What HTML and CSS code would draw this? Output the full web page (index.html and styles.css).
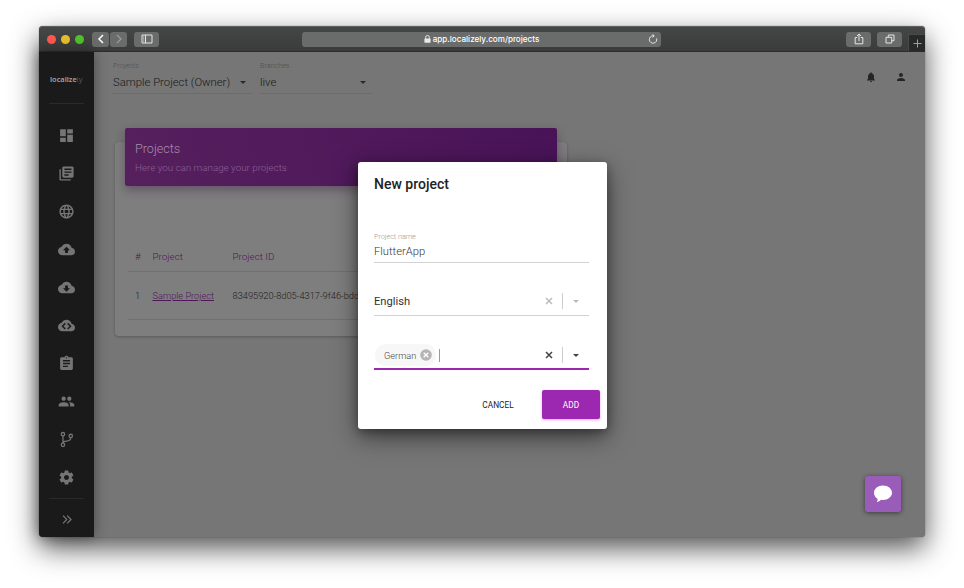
FILE: index.html
```html
<!DOCTYPE html>
<html lang="en">
<head>
  <meta charset="UTF-8" />
  <title>Localizely - Projects</title>
  <link rel="stylesheet" href="styles.css">
</head>
<body>
  <div class="window">
    <header class="titlebar">
      <div class="lights">
        <span class="light red"></span>
        <span class="light yellow"></span>
        <span class="light green"></span>
      </div>
      <div class="nav">
        <span class="tool back"><svg width="8" height="10" viewBox="0 0 8 10"><path d="M6 1 2 5l4 4"/></svg></span>
        <span class="tool forward"><svg width="8" height="10" viewBox="0 0 8 10"><path d="M2 1l4 4-4 4"/></svg></span>
      </div>
      <span class="tool panel"><svg width="12" height="10" viewBox="0 0 12 10"><path d="M1 1h10v8H1zM4.5 1v8M2.2 3h1M2.2 5h1M2.2 7h1"/></svg></span>
      <div class="address">
        <svg class="lock" width="7" height="8" viewBox="0 0 7 8"><path d="M1 3.5h5a.6.6 0 0 1 .6.6v3a.6.6 0 0 1-.6.6H1a.6.6 0 0 1-.6-.6v-3a.6.6 0 0 1 .6-.6z"/><path class="shackle" d="M1.7 4V2.3a1.8 1.8 0 0 1 3.6 0V4"/></svg>
        <span>app.localizely.com/projects</span>
        <svg class="reload" width="10" height="10" viewBox="0 0 10 10"><path d="M8.6 4.4A3.7 3.7 0 1 1 5 1.8h1M4.4.2 6.2 1.8 4.6 3.5"/></svg>
      </div>
      <span class="tool share"><svg width="10" height="12" viewBox="0 0 10 12"><path d="M3.2 4.5H1.2v6.3h7.6V4.5h-2M5 8V1.2M3 3l2-2 2 2"/></svg></span>
      <span class="tool tabs"><svg width="10" height="10" viewBox="0 0 10 10"><path d="M1 3.3h5.7V9H1zM3.3 3V1H9v5.7H7"/></svg></span>
      <span class="new-tab"><svg width="9" height="9" viewBox="0 0 9 9"><path d="M4.5.5v8M.5 4.5h8"/></svg></span>
    </header>

    <div class="app">
      <aside class="sidebar">
        <div class="logo">localize<span>ly</span></div>
        <nav class="menu">
          <a><svg viewBox="0 0 24 24"><path d="M3 13h8V3H3v10zm0 8h8v-6H3v6zm10 0h8V11h-8v10zm0-18v6h8V3h-8z"/></svg></a>
          <a><svg viewBox="0 0 24 24"><path d="M4 6H2v14c0 1.100.9 2 2 2h14v-2H4V6zm16-4H8c-1.100 0-2 .9-2 2v12c0 1.100.9 2 2 2h12c1.100 0 2-.9 2-2V4c0-1.100-.9-2-2-2zm-1 9H9V9h10v2zm-4 4H9v-2h6v2zm4-8H9V5h10v2z"/></svg></a>
          <a><svg viewBox="0 0 24 24"><path d="M11.990 2C6.470 2 2 6.480 2 12s4.470 10 9.990 10C17.520 22 22 17.520 22 12S17.520 2 11.990 2zm6.930 6h-2.950c-.32-1.250-.78-2.450-1.380-3.560 1.840.63 3.370 1.910 4.330 3.560zM12 4.040c.83 1.200 1.480 2.530 1.910 3.960h-3.820c.43-1.430 1.080-2.760 1.910-3.960zM4.260 14C4.100 13.360 4 12.690 4 12s.1-1.360.26-2h3.380c-.08.66-.14 1.320-.14 2s.06 1.340.14 2H4.260zm.82 2h2.950c.32 1.250.78 2.450 1.380 3.560-1.840-.63-3.370-1.900-4.330-3.560zm2.950-8H5.080c.96-1.660 2.490-2.930 4.330-3.560C8.810 5.550 8.350 6.750 8.030 8zM12 19.960c-.83-1.200-1.480-2.530-1.910-3.960h3.820c-.43 1.430-1.080 2.760-1.910 3.960zM14.340 14H9.660c-.09-.66-.16-1.320-.16-2s.07-1.350.16-2h4.680c.09.65.16 1.320.16 2s-.07 1.340-.16 2zm.25 5.560c.6-1.110 1.060-2.310 1.380-3.560h2.950c-.96 1.650-2.490 2.930-4.330 3.560zM16.360 14c.08-.66.14-1.320.14-2s-.06-1.340-.14-2h3.380c.16.64.26 1.310.26 2s-.1 1.360-.26 2h-3.380z"/></svg></a>
          <a><svg viewBox="0 0 24 24"><path d="M19.350 10.040C18.670 6.590 15.640 4 12 4 9.110 4 6.600 5.640 5.350 8.040 2.340 8.360 0 10.910 0 14c0 3.310 2.690 6 6 6h13c2.760 0 5-2.240 5-5 0-2.640-2.050-4.780-4.650-4.960zM14 13v4h-4v-4H7l5-5 5 5h-3z"/></svg></a>
          <a><svg viewBox="0 0 24 24"><path d="M19.350 10.040C18.670 6.590 15.640 4 12 4 9.110 4 6.600 5.640 5.350 8.040 2.340 8.360 0 10.910 0 14c0 3.310 2.690 6 6 6h13c2.760 0 5-2.240 5-5 0-2.640-2.050-4.780-4.650-4.960zM17 13l-5 5-5-5h3V9h4v4h3z"/></svg></a>
          <a><svg viewBox="0 0 24 24"><path d="M19.350 10.040C18.670 6.590 15.640 4 12 4 9.110 4 6.600 5.640 5.350 8.040 2.340 8.360 0 10.910 0 14c0 3.310 2.690 6 6 6h13c2.760 0 5-2.240 5-5 0-2.640-2.050-4.780-4.650-4.960z"/><path class="cut" d="M10.300 9 6.300 13l4 4M13.700 9l4 4-4 4"/></svg></a>
          <a><svg viewBox="0 0 24 24"><path d="M19 3h-4.180C14.400 1.840 13.300 1 12 1c-1.300 0-2.400.84-2.820 2H5c-1.100 0-2 .9-2 2v14c0 1.100.9 2 2 2h14c1.100 0 2-.9 2-2V5c0-1.100-.9-2-2-2zm-7 0c.55 0 1 .45 1 1s-.45 1-1 1-1-.45-1-1 .45-1 1-1zm2 14H7v-2h7v2zm3-4H7v-2h10v2zm0-4H7V7h10v2z"/></svg></a>
          <a><svg viewBox="0 0 24 24"><path d="M16 11c1.660 0 2.990-1.340 2.990-3S17.660 5 16 5c-1.660 0-3 1.340-3 3s1.340 3 3 3zm-8 0c1.660 0 2.990-1.340 2.990-3S9.660 5 8 5C6.340 5 5 6.340 5 8s1.340 3 3 3zm0 2c-2.330 0-7 1.170-7 3.500V19h14v-2.500c0-2.330-4.670-3.500-7-3.500zm8 0c-.29 0-.62.02-.97.05 1.160.84 1.970 1.970 1.970 3.450V19h6v-2.500c0-2.330-4.670-3.500-7-3.500z"/></svg></a>
          <a><svg viewBox="0 0 24 24"><g class="line"><circle cx="7" cy="4.500" r="2.400"/><circle cx="7" cy="19.500" r="2.400"/><circle cx="18" cy="7" r="2.400"/><path d="M7 7v10M18 9.500c0 4-3 4.500-6 4.700-3 .2-5 .8-5 2.800"/></g></svg></a>
          <a><svg viewBox="0 0 24 24"><path d="M19.430 12.980c.04-.32.07-.64.07-.98s-.03-.66-.07-.98l2.110-1.650c.19-.15.24-.42.12-.64l-2-3.460c-.12-.22-.39-.3-.61-.22l-2.490 1c-.52-.4-1.080-.73-1.690-.98l-.38-2.650C14.460 2.180 14.250 2 14 2h-4c-.25 0-.46.18-.49.42l-.38 2.650c-.61.25-1.170.59-1.690.98l-2.490-1c-.23-.09-.49 0-.61.22l-2 3.460c-.13.22-.07.49.12.64l2.110 1.650c-.04.32-.07.65-.07.98s.03.66.07.98l-2.110 1.650c-.19.15-.24.42-.12.64l2 3.460c.12.22.39.3.61.22l2.490-1c.52.4 1.080.73 1.690.98l.38 2.650c.03.24.24.42.49.42h4c.25 0 .46-.18.49-.42l.38-2.650c.61-.25 1.170-.59 1.690-.98l2.490 1c.23.09.49 0 .61-.22l2-3.460c.12-.22.07-.49-.12-.64l-2.110-1.650zM12 15.500c-1.930 0-3.500-1.570-3.500-3.500s1.570-3.500 3.500-3.500 3.500 1.570 3.500 3.500-1.570 3.500-3.500 3.500z"/></svg></a>
        </nav>
        <a class="collapse"><svg width="10" height="9" viewBox="0 0 10 9"><path d="M1 .7l3.800 3.800L1 8.300M5.200.7 9 4.500 5.200 8.300"/></svg></a>
      </aside>

      <main class="content">
        <div class="topbar">
          <div class="select projects">
            <label>Projects</label>
            <div class="value">Sample Project (Owner)<i class="caret"></i></div>
          </div>
          <div class="select branches">
            <label>Branches</label>
            <div class="value">live<i class="caret"></i></div>
          </div>
          <div class="user-icons">
            <svg viewBox="0 0 24 24"><path d="M12 22c1.100 0 2-.9 2-2h-4c0 1.100.89 2 2 2zm6-6v-5c0-3.070-1.640-5.640-4.500-6.320V4c0-.83-.67-1.500-1.500-1.500s-1.500.67-1.500 1.500v.68C7.630 5.360 6 7.920 6 11v5l-2 2v1h16v-1l-2-2z"/></svg>
            <svg viewBox="0 0 24 24"><path d="M12 12c2.210 0 4-1.790 4-4s-1.790-4-4-4-4 1.790-4 4 1.790 4 4 4zm0 2c-2.670 0-8 1.340-8 4v2h16v-2c0-2.660-5.330-4-8-4z"/></svg>
          </div>
        </div>

        <section class="card">
          <div class="card-header">
            <h4>Projects</h4>
            <p>Here you can manage your projects</p>
          </div>
          <div class="table">
            <div class="row head"><span>#</span><span>Project</span><span>Project ID</span></div>
            <div class="row"><span>1</span><span><a class="link">Sample Project</a></span><span>83495920-8d05-4317-9f46-bdd</span></div>
          </div>
        </section>
      </main>
    </div>

    <div class="modal">
      <h3>New project</h3>
      <label>Project name</label>
      <div class="field name">FlutterApp</div>
      <div class="field language">
        <span class="text">English</span>
        <svg class="clear" width="8" height="8" viewBox="0 0 8 8"><path d="M1 1l6 6M7 1 1 7"/></svg>
        <i class="separator"></i>
        <i class="caret"></i>
      </div>
      <div class="field language active">
        <span class="chip">German
          <svg width="12" height="12" viewBox="0 0 12 12"><circle cx="6" cy="6" r="5.800"/><path d="M3.700 3.700l4.600 4.600M8.300 3.700 3.700 8.300"/></svg>
        </span>
        <i class="cursor"></i>
        <svg class="clear" width="8" height="8" viewBox="0 0 8 8"><path d="M1 1l6 6M7 1 1 7"/></svg>
        <i class="separator"></i>
        <i class="caret"></i>
      </div>
      <div class="actions">
        <button class="cancel">CANCEL</button>
        <button class="add">ADD</button>
      </div>
    </div>

    <div class="chat">
      <svg width="20" height="18" viewBox="0 0 20 18"><path d="M10 .5c5 0 9 3.200 9 7.200s-4 7.200-9 7.200c-.7 0-1.400-.1-2-.2-1 1.200-2.600 2.100-4.500 2.300.8-.9 1.200-2 1.100-3.100C2.400 12.600 1 10.300 1 7.700 1 3.700 5 .5 10 .5z"/></svg>
    </div>
  </div>
</body>
</html>
```
FILE: styles.css
```css
* {
  box-sizing: border-box;
}

body {
  margin: 0;
  height: 588px;
  padding: 26px 0 0 39px;
  overflow: hidden;
  background: #fff;
  font-family: Roboto, sans-serif;
}

svg {
  display: block;
}

.window {
  position: relative;
  width: 886px;
  height: 511px;
  border-radius: 4px;
  background: #767676;
  box-shadow: 0 0 1px rgba(0, 0, 0, 0.7), 0 11px 28px rgba(0, 0, 0, 0.68);
}

/* browser bar */
.titlebar {
  display: flex;
  align-items: center;
  height: 26px;
  padding-left: 8px;
  border-radius: 4px 4px 0 0;
  border-top: 1px solid #5e605f;
  border-bottom: 1px solid #2b2d2c;
  background: linear-gradient(#454746, #393c3a);
}

.lights {
  display: flex;
  gap: 5px;
}

.light {
  width: 9px;
  height: 9px;
  border-radius: 50%;
}

.red { background: #fc5850; }
.yellow { background: #e6bd2c; }
.green { background: #4fc22c; }

.nav {
  display: flex;
  gap: 1px;
  margin-left: 8px;
}

.tool {
  display: flex;
  align-items: center;
  justify-content: center;
  width: 25px;
  height: 15px;
  border-radius: 3px;
  background: #6a6c6b;
}

.tool svg,
.new-tab svg,
.reload {
  fill: none;
  stroke: #e4e4e4;
}

.nav .tool {
  width: 17px;
}

.back svg { stroke: #fff; stroke-width: 1.500; }
.forward svg { stroke: #9a9c9b; stroke-width: 1.200; }

.panel {
  margin-left: 7px;
}

.address {
  display: flex;
  align-items: center;
  justify-content: center;
  position: relative;
  width: 359px;
  height: 15px;
  margin-left: 143px;
  border-radius: 3px;
  background: #6a6c6b;
  color: #fff;
  font: 500 8.100px Inter, sans-serif;
}

.lock {
  margin-right: 2px;
  fill: #e8e8e8;
}

.shackle {
  fill: none;
  stroke: #e8e8e8;
}

.reload {
  position: absolute;
  right: 3px;
  top: 2px;
}

.share { margin-left: 185px; }
.tabs { margin-left: 6px; }

.new-tab {
  display: flex;
  align-items: center;
  justify-content: center;
  align-self: flex-end;
  width: 17px;
  height: 17px;
  margin-left: auto;
  border-left: 1px solid #484a49;
  border-top: 1px solid #484a49;
  background: #282a29;
}

.new-tab svg {
  stroke: #a0a0a0;
}

/* layout */
.app {
  display: flex;
  height: 485px;
}

.sidebar {
  display: flex;
  flex-direction: column;
  align-items: center;
  width: 55px;
  border-radius: 0 0 0 4px;
  background: #1a1a1a;
  box-shadow: 0 0 14px rgba(0, 0, 0, 0.4);
}

.logo {
  width: 35px;
  height: 52px;
  padding: 21px 0 0 1px;
  border-bottom: 1px solid #2b2b2b;
  color: #a3a3a3;
  font: 600 7.400px/13px "Noto Sans", sans-serif;
  white-space: nowrap;
}

.logo span {
  color: #555;
  font-weight: 400;
}

.menu {
  width: 35px;
  height: 395px;
  padding-top: 12px;
  border-bottom: 1px solid #292929;
}

.menu a {
  display: flex;
  align-items: center;
  justify-content: center;
  height: 38px;
}

.menu svg {
  width: 17px;
  height: 17px;
  fill: #757575;
}

.menu .cut {
  fill: none;
  stroke: #1a1a1a;
  stroke-width: 2;
}

.menu .line {
  fill: none;
  stroke: #757575;
  stroke-width: 1.800;
}

.collapse {
  margin-top: 16px;
}

.collapse svg {
  fill: none;
  stroke: #757575;
  stroke-width: 1.200;
}

.content {
  flex: 1;
  padding: 9px 19px 0 19px;
}

.topbar {
  display: flex;
}

.select {
  height: 33px;
  margin-right: 8px;
  border-bottom: 1px solid #6b6b6b;
}

.projects { width: 139px; }
.branches { width: 112px; }

.select label {
  display: block;
  color: #505050;
  font-size: 7.200px;
  font-weight: 300;
  line-height: 10px;
}

.value {
  display: flex;
  align-items: center;
  justify-content: space-between;
  padding: 0 6px 0 0;
  color: #181818;
  font-size: 11.300px;
  font-weight: 300;
  line-height: 23px;
}

.caret {
  border: 3.500px solid transparent;
  border-top-color: #2a2a2a;
  border-bottom: 0;
}

.user-icons {
  display: flex;
  gap: 18px;
  margin: 10px -1px 0 auto;
}

.user-icons svg {
  width: 12px;
  height: 12px;
  fill: #252525;
}

/* projects card */
.card {
  display: flow-root;
  width: 452px;
  height: 194px;
  margin: 48px 0 0 2px;
  padding: 0 10px;
  border-radius: 4px;
  background: #7e7e7e;
  box-shadow: 0 1px 3px rgba(0, 0, 0, 0.25);
}

.card-header {
  height: 58px;
  margin-top: -14px;
  padding: 12px 10px;
  border-radius: 2px;
  background: linear-gradient(75deg, #56205e, #491358);
  box-shadow: 0 4px 10px rgba(60, 20, 70, 0.4);
}

.card-header h4 {
  margin: 0;
  color: #a58ca9;
  font-size: 12.600px;
  font-weight: 300;
  line-height: 17px;
}

.card-header p {
  margin: 5px 0 0;
  color: #8a6093;
  font-size: 9.800px;
  font-weight: 300;
  line-height: 12px;
}

.table {
  margin: 42px 3px 0;
}

.row {
  display: grid;
  grid-template-columns: 17.500px 80px 1fr;
  height: 48px;
  padding-left: 7px;
  border-bottom: 1px solid #707070;
  color: #202020;
  font-size: 9.250px;
  font-weight: 300;
  line-height: 48px;
  white-space: nowrap;
}

.row.head {
  height: 44px;
  color: #501659;
  font-size: 9.850px;
  line-height: 57px;
}

.link {
  color: #501659;
  text-decoration: underline;
}

/* new project dialog */
.modal {
  position: absolute;
  left: 318.500px;
  top: 135.500px;
  width: 249px;
  height: 267px;
  padding: 13px 17px 0 16.500px;
  border-radius: 3px;
  background: #fff;
  box-shadow: 0 8px 25px rgba(0, 0, 0, 0.5), 0 3px 10px rgba(0, 0, 0, 0.3);
  color: #333;
}

.modal h3 {
  margin: 0 0 41px;
  color: #222;
  font-size: 14px;
  font-weight: 500;
  line-height: 18px;
}

.modal label {
  display: block;
  color: #999;
  font-size: 7.200px;
  font-weight: 300;
  line-height: 5px;
}

.field {
  display: flex;
  align-items: center;
  width: 215px;
  border-bottom: 1px solid #d2d2d2;
}

.name {
  height: 24px;
  padding-top: 2px;
  color: #333;
  font-size: 11.200px;
  font-weight: 300;
}

.language {
  height: 28px;
  margin-top: 25px;
  padding-right: 10px;
  font-size: 11.200px;
}

.language .text {
  margin-right: auto;
}

.clear {
  stroke: #bbb;
  stroke-width: 1.500;
}

.separator {
  width: 1px;
  height: 16px;
  margin: 0 10px 0 9px;
  background: #ccc;
}

.modal .caret {
  border-top-color: #bbb;
}

.active {
  height: 27px;
  margin-top: 27px;
  border-bottom: 2px solid #9c27b0;
}

.active .clear {
  margin-left: auto;
  stroke: #444;
}

.modal .active .caret {
  border-top-color: #444;
}

.chip {
  display: flex;
  align-items: center;
  gap: 4px;
  height: 22px;
  margin-left: 1px;
  padding: 0 4px 0 9px;
  border-radius: 11px;
  background: #f7f7f7;
  color: #444;
  font-size: 9.200px;
  font-weight: 300;
}

.chip svg {
  fill: #b5b5b5;
  stroke: none;
}

.chip path {
  stroke: #fff;
  stroke-width: 1.300;
}

.cursor {
  width: 1px;
  height: 13px;
  margin-left: 3px;
  background: #999;
}

.actions {
  display: flex;
  justify-content: flex-end;
  margin: 20.500px -10.500px 0 0;
}

button {
  height: 29px;
  padding: 0;
  border: 0;
  border-radius: 2px;
  font: 400 8.300px Roboto, sans-serif;
}

.cancel {
  width: 60px;
  margin-right: 14px;
  background: none;
  color: #222;
}

.add {
  width: 58px;
  background: #9c27b0;
  color: #fff;
  box-shadow: 0 1px 3px rgba(156, 39, 176, 0.4);
}

/* support chat button */
.chat {
  position: absolute;
  left: 825.500px;
  top: 450px;
  display: flex;
  align-items: center;
  justify-content: center;
  width: 36px;
  height: 36px;
  border-radius: 3px;
  background: #9a5cb9;
  box-shadow: 0 1px 5px rgba(0, 0, 0, 0.5);
}

.chat svg {
  fill: #fff;
}
```
